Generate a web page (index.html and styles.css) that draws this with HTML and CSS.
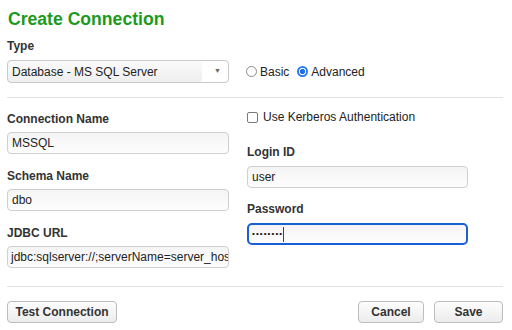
FILE: index.html
```html
<!DOCTYPE html>
<html>
<head>
<meta charset="utf-8">
<link rel="stylesheet" href="styles.css">
</head>
<body>
<div class="dialog">
  <h1 class="title">Create Connection</h1>
  <div class="top-row">
    <div class="field">
      <div class="label label-type">Type</div>
      <div class="select"><span>Database - MS SQL Server</span><span class="arrow">▼</span></div>
    </div>
    <div class="radios">
      <span class="radio"></span><span class="radio-text">Basic</span>
      <span class="radio checked"></span><span class="radio-text">Advanced</span>
    </div>
  </div>
  <div class="divider"></div>
  <div class="columns">
    <div class="col-left">
      <div class="label">Connection Name</div>
      <div class="input">MSSQL</div>
      <div class="label spaced">Schema Name</div>
      <div class="input">dbo</div>
      <div class="label spaced">JDBC URL</div>
      <div class="input clip"><span class="clip-text">jdbc:sqlserver://;serverName=server_host</span></div>
    </div>
    <div class="col-right">
      <div class="check-row"><span class="checkbox"></span><span>Use Kerberos Authentication</span></div>
      <div class="label label-login">Login ID</div>
      <div class="input r-input">user</div>
      <div class="label spaced-r">Password</div>
      <div class="input r-input focused"><span class="dots">••••••••</span><span class="caret"></span></div>
    </div>
  </div>
  <div class="divider divider-bottom"></div>
  <div class="actions">
    <div class="btn btn-test">Test Connection</div>
    <div class="actions-right">
      <div class="btn btn-cancel">Cancel</div>
      <div class="btn btn-save">Save</div>
    </div>
  </div>
</div>
</body>
</html>
```

FILE: styles.css
```css
html, body {
  margin: 0;
  padding: 0;
  background: #fff;
}
body {
  font-family: "Liberation Sans", Arial, sans-serif;
  color: #333;
}
.dialog {
  width: 496px;
  margin-left: 7px;
}
.title {
  margin: 0;
  padding-top: 9px;
  padding-left: 1px;
  font-size: 17.6px;
  line-height: 20px;
  font-weight: bold;
  color: #1b9a1b;
}
.top-row {
  display: flex;
  align-items: flex-end;
  gap: 17px;
}
.field {
  width: 222px;
}
.label {
  font-size: 12px;
  line-height: 14px;
  font-weight: bold;
  color: #333;
}
.label-type {
  margin-top: 10px;
  margin-bottom: 7px;
}
.select {
  height: 21px;
  border: 1px solid #c9c9c9;
  border-radius: 4px;
  background: linear-gradient(#fafafa, #efefef);
  box-shadow: inset -26px 0 0 #fff;
  display: flex;
  justify-content: space-between;
  align-items: center;
  padding-left: 4px;
  padding-right: 7px;
  font-size: 12px;
  color: #222;
}
.select .arrow {
  font-size: 7px;
  color: #666;
  align-self: flex-start;
  margin-top: 6px;
}
.radios {
  height: 23px;
  display: flex;
  align-items: center;
  font-size: 12px;
  color: #222;
}
.radio {
  width: 9px;
  height: 9px;
  border: 1px solid #8a8a8a;
  border-radius: 50%;
  background: #fff;
  margin-right: 3px;
}
.radio.checked {
  width: 11px;
  height: 11px;
  border: none;
  background: radial-gradient(circle, #1f6fe5 0 2.4px, #fff 2.9px 3.4px, #2a7cf0 3.9px);
  margin-left: 8px;
}
.radio-text {
  line-height: 14px;
}
.divider {
  height: 1px;
  background: #e2e2e2;
  margin-top: 14px;
}
.columns {
  display: flex;
  gap: 18px;
}
.col-left {
  width: 222px;
  padding-top: 14px;
  display: flex;
  flex-direction: column;
}
.col-left .input {
  margin-top: 6px;
}
.col-left .spaced {
  margin-top: 15px;
}
.col-right {
  width: 221px;
  padding-top: 12px;
  display: flex;
  flex-direction: column;
}
.input {
  height: 20px;
  border: 1px solid #cfcfcf;
  border-radius: 4px;
  background: linear-gradient(#f4f4f4, #fdfdfd);
  padding-left: 4px;
  font-size: 12px;
  line-height: 20px;
  color: #222;
  white-space: nowrap;
  overflow: hidden;
  display: flex;
  align-items: center;
}
.clip {
  padding-left: 3px;
}
.check-row {
  display: flex;
  align-items: center;
  height: 14px;
  font-size: 12px;
  color: #222;
}
.checkbox {
  width: 9px;
  height: 9px;
  border: 1px solid #7a7a7a;
  border-radius: 2px;
  margin-right: 5px;
  background: #fff;
}
.label-login {
  margin-top: 21px;
}
.r-input {
  margin-top: 7px;
}
.spaced-r {
  margin-top: 14px;
}
.focused {
  border: 2px solid #1a5fd6;
  height: 18px;
  padding-left: 3px;
  border-radius: 5px;
}
.dots {
  font-size: 8px;
  letter-spacing: 1.1px;
  color: #111;
}
.caret {
  display: inline-block;
  width: 1px;
  height: 15px;
  background: #444;
  margin-left: 0;
}
.divider-bottom {
  margin-top: 18px;
}
.actions {
  display: flex;
  justify-content: space-between;
  margin-top: 14px;
}
.actions-right {
  display: flex;
  gap: 10px;
}
.btn {
  height: 20px;
  border: 1px solid #bdbdbd;
  border-radius: 4px;
  background: linear-gradient(#fdfdfd, #ececec);
  font-size: 12px;
  font-weight: bold;
  color: #333;
  display: flex;
  align-items: center;
  justify-content: center;
}
.btn-test {
  width: 108px;
}
.btn-cancel {
  width: 64px;
}
.btn-save {
  width: 67px;
}
```
